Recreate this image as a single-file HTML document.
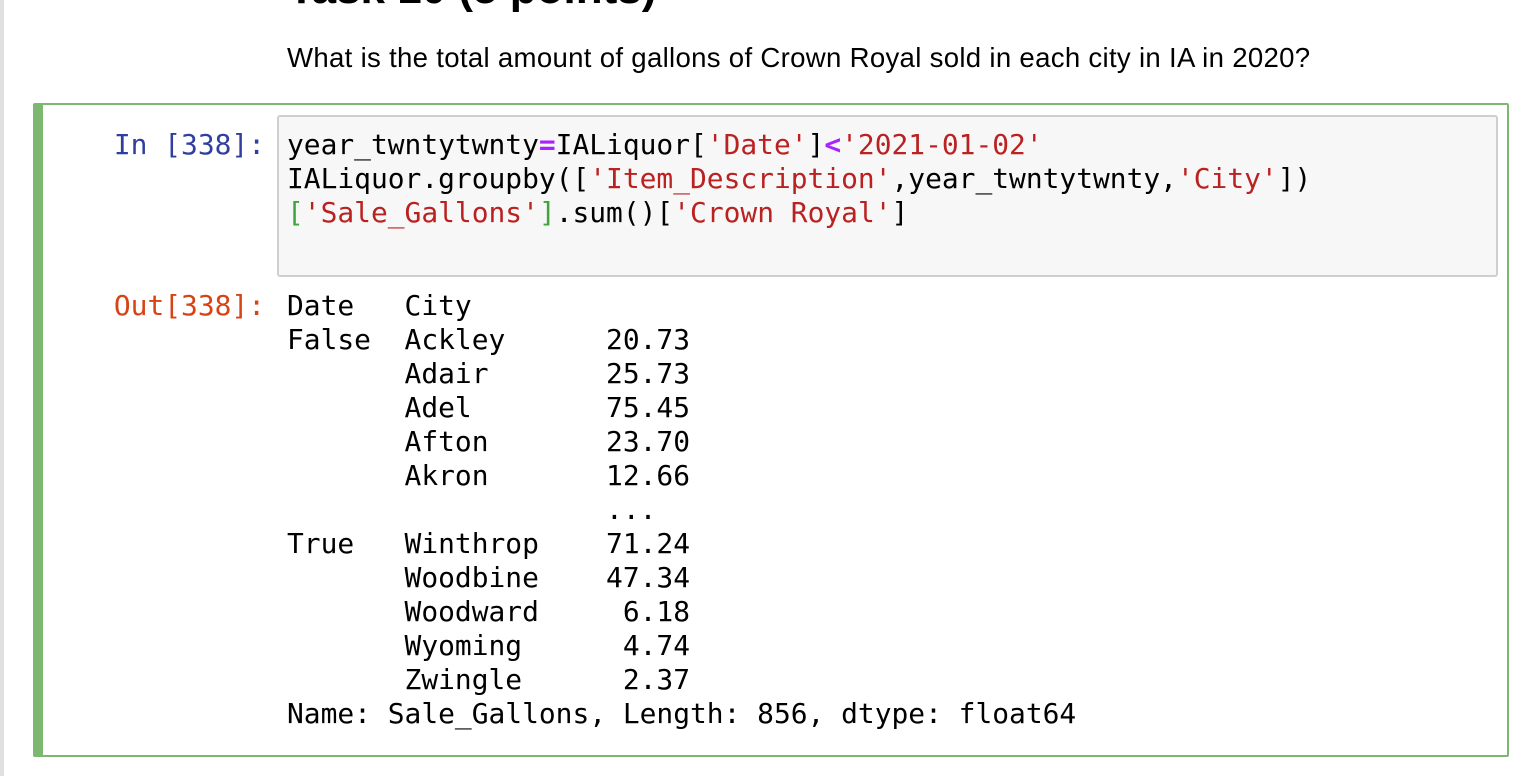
<!DOCTYPE html>
<html><head><meta charset="utf-8"><style>
*{margin:0;padding:0;box-sizing:border-box}
body{width:1528px;height:776px;background:#fff;position:relative;overflow:hidden;font-family:"Liberation Sans",Arial,sans-serif}
.strip{position:absolute;left:0;top:0;width:4px;height:776px;background:#e0e0e0}
h1{position:absolute;left:288px;top:-36px;font-size:44px;font-weight:bold;color:#000;white-space:nowrap}
.q{position:absolute;left:287px;top:42px;font-size:27.6px;color:#000;white-space:nowrap;letter-spacing:0.3px}
.cell{position:absolute;left:33px;top:103px;width:1476px;height:654px;border:2px solid #7cb870;border-left:10px solid #7cb870;border-radius:2px}
.mono{font-family:"DejaVu Sans Mono","Liberation Mono",monospace;font-size:27.9px;line-height:34px;white-space:pre}
.inp{position:absolute;left:277px;top:115px;width:1221px;height:162px;background:#f7f7f7;border:2px solid #cfcfcf;border-radius:3px}
.code{position:absolute;left:287px;top:128px;color:#000}
.pin{position:absolute;right:1263px;top:128px;color:#303f9f}
.pout{position:absolute;right:1263px;top:289px;color:#d84315}
.out{position:absolute;left:287px;top:289px;color:#000}
.s{color:#ba2121}.g{color:#3fa63f}.p{color:#aa22ff;font-weight:bold}
</style></head><body>
<div class="strip"></div>
<h1>Task 10 (5 points)</h1>
<div class="q">What is the total amount of gallons of Crown Royal sold in each city in IA in 2020?</div>
<div class="cell"></div>
<div class="inp"></div>
<div class="mono pin">In [338]:</div>
<div class="mono code">year_twntytwnty<span class="p">=</span>IALiquor[<span class="s">'Date'</span>]<span class="p">&lt;</span><span class="s">'2021-01-02'</span>
IALiquor.groupby([<span class="s">'Item_Description'</span>,year_twntytwnty,<span class="s">'City'</span>])
<span class="g">[</span><span class="s">'Sale_Gallons'</span><span class="g">]</span>.sum()[<span class="s">'Crown Royal'</span>]</div>
<div class="mono pout">Out[338]:</div>
<div class="mono out">Date   City
False  Ackley      20.73
       Adair       25.73
       Adel        75.45
       Afton       23.70
       Akron       12.66
                   ...
True   Winthrop    71.24
       Woodbine    47.34
       Woodward     6.18
       Wyoming      4.74
       Zwingle      2.37
Name: Sale_Gallons, Length: 856, dtype: float64</div>
</body></html>
